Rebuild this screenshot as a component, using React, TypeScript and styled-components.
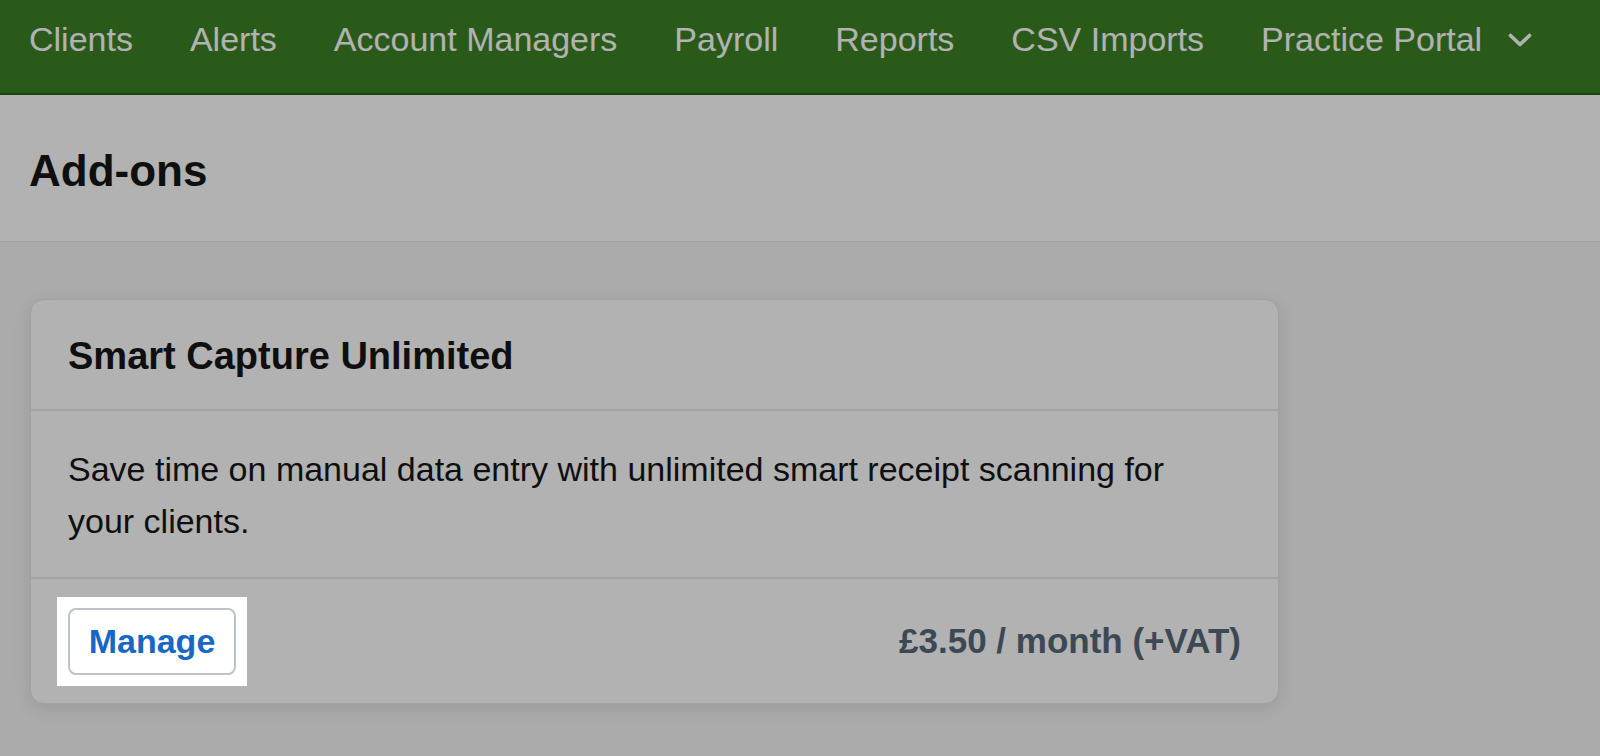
import styled, { createGlobalStyle } from "styled-components";

const GlobalStyle = createGlobalStyle`
  html, body {
    margin: 0;
    padding: 0;
    background: #f5f5f5;
    font-family: "Liberation Sans", Arial, sans-serif;
  }
  * { box-sizing: border-box; }
`;

const Page = styled.div`
  min-height: 756px;
  background: #f5f5f5;
`;

const Nav = styled.nav`
  height: 95px;
  display: flex;
  align-items: center;
  gap: 57px;
  padding: 0 0 14px 29px;
  background: #3c8125;
  border-bottom: 2px solid #2c6318;
`;

const NavItem = styled.a`
  display: flex;
  align-items: center;
  gap: 26px;
  color: #ffffff;
  font-size: 34px;
  text-decoration: none;
  white-space: nowrap;
`;

const Header = styled.header`
  height: 147px;
  display: flex;
  align-items: center;
  padding: 6px 29px 0 29px;
  background: #ffffff;
  border-bottom: 1px solid #e9e9f3;
`;

const Title = styled.h1`
  margin: 0;
  font-size: 44px;
  font-weight: 700;
  color: #161616;
`;

const Content = styled.main`
  padding: 57px 30px 40px 30px;
`;

const Card = styled.section`
  width: 1249px;
  background: #ffffff;
  border: 1px solid #e6e6ed;
  border-radius: 14px;
  box-shadow: 0 4px 18px rgba(0, 0, 0, 0.1);
`;

const CardHead = styled.div`
  height: 111px;
  display: flex;
  align-items: center;
  padding: 4px 37px 0 37px;
  border-bottom: 2px solid #e8e8f2;
`;

const CardTitle = styled.h2`
  margin: 0;
  font-size: 38px;
  font-weight: 700;
  color: #161616;
`;

const CardBody = styled.div`
  height: 168px;
  display: flex;
  align-items: center;
  padding: 2px 37px 0 37px;
  border-bottom: 2px solid #e8e8f2;
`;

const Description = styled.p`
  margin: 0;
  font-size: 34px;
  line-height: 52px;
  color: #161616;
  max-width: 1150px;
`;

const CardFoot = styled.div`
  height: 124px;
  display: flex;
  align-items: center;
  justify-content: space-between;
  padding: 0 37px;
`;

const Spotlight = styled.div`
  position: relative;
  z-index: 2;
  margin-left: -11px;
  padding: 11px;
  background: #ffffff;
  box-shadow: 0 0 0 4000px rgba(0, 0, 0, 0.3);
`;

const Button = styled.button`
  display: block;
  width: 168px;
  height: 67px;
  border: 2px solid #bcc3cc;
  border-radius: 8px;
  background: #ffffff;
  color: #1668c4;
  font-family: "Liberation Sans", Arial, sans-serif;
  font-size: 34px;
  font-weight: 700;
  cursor: pointer;
`;

const Price = styled.span`
  font-size: 35px;
  font-weight: 700;
  color: #56697a;
`;

const Chevron = () => (
  <svg width="24" height="14" viewBox="0 0 24 14" fill="none">
    <polyline
      points="2.5,2.5 12,11.5 21.5,2.5"
      stroke="#ffffff"
      strokeWidth="3.6"
      strokeLinecap="round"
      strokeLinejoin="round"
    />
  </svg>
);

const navItems = ["Clients", "Alerts", "Account Managers", "Payroll", "Reports", "CSV Imports"];

export default function App() {
  return (
    <Page>
      <GlobalStyle />
      <Nav>
        {navItems.map(item => (
          <NavItem key={item} href="#">{item}</NavItem>
        ))}
        <NavItem href="#">
          Practice Portal
          <Chevron />
        </NavItem>
      </Nav>
      <Header>
        <Title>Add-ons</Title>
      </Header>
      <Content>
        <Card>
          <CardHead>
            <CardTitle>Smart Capture Unlimited</CardTitle>
          </CardHead>
          <CardBody>
            <Description>
              Save time on manual data entry with unlimited smart receipt scanning for your clients.
            </Description>
          </CardBody>
          <CardFoot>
            <Spotlight>
              <Button>Manage</Button>
            </Spotlight>
            <Price>£3.50 / month (+VAT)</Price>
          </CardFoot>
        </Card>
      </Content>
    </Page>
  );
}
